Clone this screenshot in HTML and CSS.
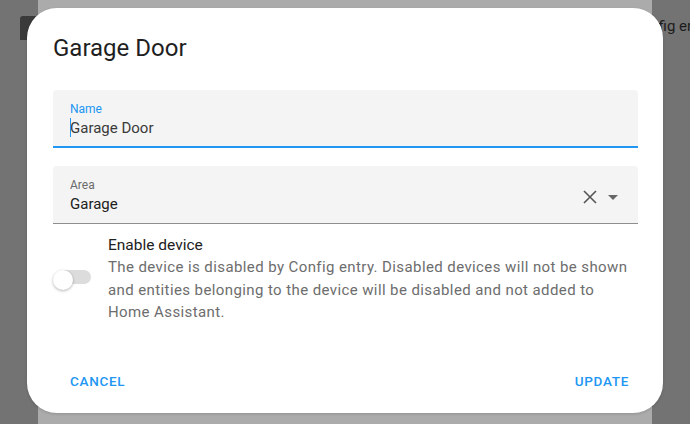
FILE: index.html
```html
<!DOCTYPE html>
<html lang="en">
<head>
<meta charset="utf-8">
<title>Garage Door</title>
<link rel="stylesheet" href="styles.css">
</head>
<body>
<div class="backdrop">
  <div class="side side-left"><div class="peek"></div></div>
  <div class="middle"></div>
  <div class="side side-right"><span class="peek-text">Config entry</span></div>
</div>
<div class="dialog" role="dialog">
  <h2 class="title">Garage Door</h2>
  <div class="field field-focused">
    <div class="field-main">
      <div class="label label-focused">Name</div>
      <div class="value"><span class="caret"></span>Garage Door</div>
    </div>
  </div>
  <div class="field field-select">
    <div class="field-main">
      <div class="label">Area</div>
      <div class="value">Garage</div>
    </div>
    <div class="field-icons">
      <svg class="icon-clear" width="14" height="14" viewBox="0 0 14 14"><path d="M1 1 L13 13 M13 1 L1 13" stroke="#555" stroke-width="1.6" fill="none"/></svg>
      <svg class="icon-drop" width="10" height="5" viewBox="0 0 10 5"><polygon points="0,0 10,0 5,5" fill="#666"/></svg>
    </div>
  </div>
  <div class="enable-row">
    <div class="toggle-col">
      <div class="toggle">
        <div class="track"></div>
        <div class="thumb"></div>
      </div>
    </div>
    <div class="enable-text">
      <div class="enable-title">Enable device</div>
      <div class="enable-desc">The device is disabled by Config entry. Disabled devices will not be shown and entities belonging to the device will be disabled and not added to Home Assistant.</div>
    </div>
  </div>
  <div class="actions">
    <button class="btn">Cancel</button>
    <button class="btn">Update</button>
  </div>
</div>
</body>
</html>
```
FILE: styles.css
```css
html, body {
  margin: 0;
  padding: 0;
}
body {
  width: 690px;
  height: 424px;
  overflow: hidden;
  position: relative;
  font-family: Roboto, "Liberation Sans", sans-serif;
}
.backdrop {
  display: flex;
  height: 424px;
}
.side {
  width: 38px;
  flex: none;
  background: #737373;
  box-sizing: border-box;
}
.side-left {
  padding: 16px 0 0 20px;
}
.peek {
  width: 24px;
  height: 24px;
  background: #3a3a3a;
  border-radius: 3px 0 0 0;
}
.middle {
  flex: 1;
  background: #ababab;
}
.side-right {
  padding-top: 18px;
  white-space: nowrap;
  overflow: visible;
}
.peek-text {
  display: block;
  margin-left: -20px;
  font-size: 15px;
  line-height: 16px;
  color: #1c1c1c;
}
.dialog {
  position: absolute;
  left: 27px;
  top: 8px;
  width: 636px;
  height: 405px;
  box-sizing: border-box;
  padding: 0 25px 0 26px;
  background: #fff;
  border-radius: 30px;
  display: flex;
  flex-direction: column;
  box-shadow: 0 1px 3px rgba(0,0,0,0.15);
}
.title {
  margin: 0;
  padding-top: 24px;
  font-size: 24px;
  line-height: 32px;
  font-weight: 400;
  color: #1f1f1f;
}
.field {
  display: flex;
  height: 58px;
  box-sizing: border-box;
  background: #f4f4f4;
  border-radius: 4px 4px 0 0;
  padding: 11px 0 0 17px;
}
.field-focused {
  margin-top: 26px;
  border-bottom: 2px solid #2196f3;
}
.field-select {
  margin-top: 18px;
  border-bottom: 1px solid #8e8e8e;
}
.field-main {
  flex: 1;
}
.label {
  font-size: 12px;
  line-height: 16px;
  color: #6b6b6b;
}
.label-focused {
  color: #2196f3;
}
.value {
  margin-top: 1px;
  font-size: 15px;
  line-height: 20px;
  color: #212121;
  position: relative;
}
.field-focused .value {
  color: #3a3a3a;
}
.caret {
  position: absolute;
  left: 0;
  top: 0;
  width: 1px;
  height: 19px;
  background: #2196f3;
}
.field-icons {
  display: flex;
  align-items: center;
  gap: 11px;
  padding: 9px 20px 0 0;
  height: 22px;
}
.icon-clear, .icon-drop {
  display: block;
}
.enable-row {
  display: flex;
  align-items: center;
  margin-top: 10px;
}
.toggle-col {
  width: 55px;
  flex: none;
}
.toggle {
  position: relative;
  width: 38px;
  height: 20px;
}
.track {
  margin: 3px 0 0 4px;
  width: 34px;
  height: 14px;
  border-radius: 7px;
  background: #dcdcdc;
}
.thumb {
  position: absolute;
  left: 0;
  top: 0;
  width: 20px;
  height: 20px;
  border-radius: 50%;
  background: #fff;
  box-shadow: 0 1px 3px rgba(0,0,0,0.3);
}
.enable-text {
  flex: 1;
}
.enable-title {
  font-size: 15.5px;
  line-height: 22px;
  color: #212121;
}
.enable-desc {
  font-size: 15px;
  line-height: 22.5px;
  letter-spacing: 0.4px;
  color: #6d6d6d;
}
.actions {
  margin-top: auto;
  padding: 0 9px 22px 17px;
  display: flex;
  justify-content: space-between;
}
.btn {
  border: 0;
  background: none;
  padding: 0;
  font-family: Roboto, "Liberation Sans", sans-serif;
  font-size: 13.5px;
  line-height: 20px;
  font-weight: 500;
  letter-spacing: 0.7px;
  text-transform: uppercase;
  color: #2196f3;
}
```
